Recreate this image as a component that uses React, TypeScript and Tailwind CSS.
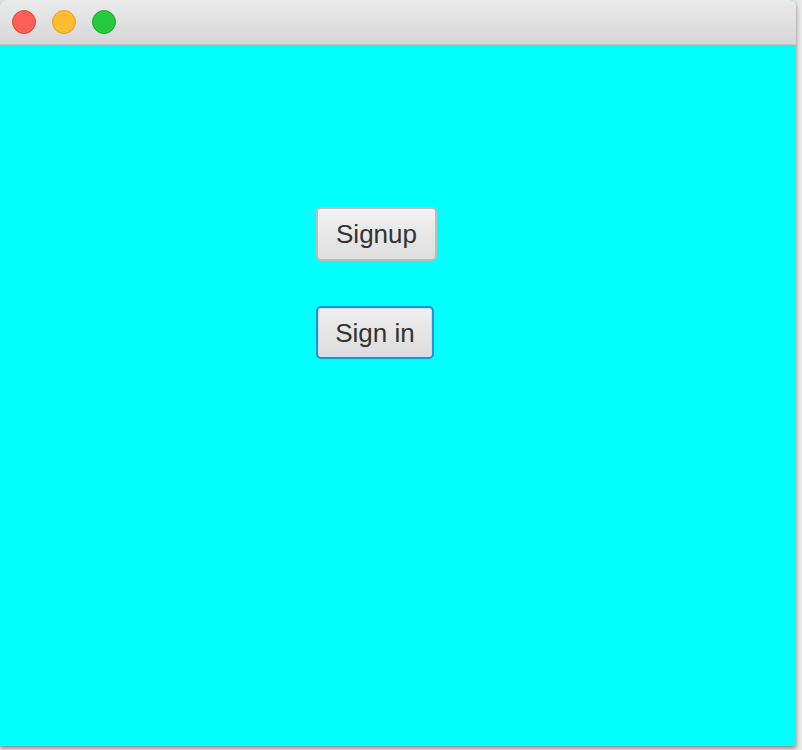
import React from 'react';

const App: React.FC = () => {
  return (
    <div className="w-[802px] h-[750px] bg-[#e8e8e8] overflow-hidden" style={{ fontFamily: '"Liberation Sans", Arial, sans-serif' }}>
      <div className="w-[796px] h-[746px] flex flex-col bg-[#00ffff] rounded-t-[6px] overflow-hidden shadow-[0_2px_4px_rgba(0,0,0,0.45)]">
        <div className="h-[45px] shrink-0 flex items-center gap-[16px] pl-[12px] bg-gradient-to-b from-[#ebebeb] to-[#d6d6d6] border-b border-[#c4c4c4]">
          <span className="w-[24px] h-[24px] rounded-full bg-[#fe5f57] border border-[#e0443e]" />
          <span className="w-[24px] h-[24px] rounded-full bg-[#febc2e] border border-[#dea123]" />
          <span className="w-[24px] h-[24px] rounded-full bg-[#28c840] border border-[#1aab29]" />
        </div>
        <div className="flex-1 flex flex-col items-start gap-[45px] pt-[162px] pl-[316px]">
          <button className="w-[121px] h-[54px] rounded-[5px] border-2 border-[#bdbdbd] bg-gradient-to-b from-[#f2f2f2] to-[#dedede] text-[26px] text-[#333] leading-none">
            Signup
          </button>
          <button className="w-[118px] h-[53px] rounded-[5px] border-2 border-[#2a8fd8] bg-gradient-to-b from-[#efefef] to-[#dcdcdc] text-[26px] text-[#333] leading-none shadow-[inset_0_0_0_1px_#bfe0f5]">
            Sign in
          </button>
        </div>
      </div>
    </div>
  );
};

export default App;
